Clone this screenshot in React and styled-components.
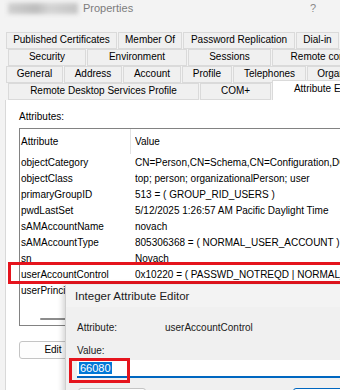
import styled, { createGlobalStyle } from "styled-components";

const GlobalStyle = createGlobalStyle`
  html, body { margin: 0; padding: 0; }
  body {
    width: 340px;
    height: 390px;
    overflow: hidden;
    background: #f3f3f3;
    font-family: "Liberation Sans", Arial, sans-serif;
    color: #000;
  }
  * { box-sizing: border-box; }
`;

const tabRows = [
    { left: 6, tabs: [["Published Certificates", 111], ["Member Of", 64], ["Password Replication", 112], ["Dial-in", 43], ["Object", 60]] },
    { left: 8, tabs: [["Security", 78], ["Environment", 100], ["Sessions", 83], ["Remote control", 105]] },
    { left: 6, tabs: [["General", 57], ["Address", 58], ["Account", 58], ["Profile", 50], ["Telephones", 73], ["Organization", 77]] },
    { left: 8, tabs: [["Remote Desktop Services Profile", 191], ["COM+", 71], ["Attribute Editor", 110, true]] },
];

const attributes = [
    ["objectCategory", "CN=Person,CN=Schema,CN=Configuration,DC=corp,DC=local"],
    ["objectClass", "top; person; organizationalPerson; user"],
    ["primaryGroupID", "513 = ( GROUP_RID_USERS )"],
    ["pwdLastSet", "5/12/2025 1:26:57 AM Pacific Daylight Time"],
    ["sAMAccountName", "novach"],
    ["sAMAccountType", "805306368 = ( NORMAL_USER_ACCOUNT )"],
    ["sn", "Novach"],
    ["userAccountControl", "0x10220 = ( PASSWD_NOTREQD | NORMAL_ACCOUNT | DONT_EXPIRE_PASSWD )"],
    ["userPrincipalName", "novach@corp.local"],
];

function App() {
    return (
        <Window>
            <GlobalStyle />
            <TitleBar>
                <BlurredName />
                <TitleText>Properties</TitleText>
                <Help>?</Help>
            </TitleBar>

            <Tabs>
                {tabRows.map((row, i) => (
                    <TabRow key={i} $left={row.left}>
                        {row.tabs.map(([label, width, active]) => (
                            <Tab key={label} $width={width} $active={active}>
                                {label}
                            </Tab>
                        ))}
                    </TabRow>
                ))}
            </Tabs>

            <Panel>
                <Label>Attributes:</Label>
                <ListBox>
                    <HeaderRow>
                        <NameHeader>Attribute</NameHeader>
                        <ValueCell>Value</ValueCell>
                    </HeaderRow>
                    {attributes.map(([name, value]) => (
                        <Row key={name}>
                            <NameCell>{name}</NameCell>
                            <ValueCell>{value}</ValueCell>
                        </Row>
                    ))}
                    <ScrollTrack>
                        <ScrollThumb />
                    </ScrollTrack>
                </ListBox>
                <EditButton>Edit</EditButton>
            </Panel>

            <RowHighlight />

            <Dialog>
                <DialogTitle>Integer Attribute Editor</DialogTitle>
                <DialogBody>
                    <FieldRow>
                        <span>Attribute:</span>
                        <span>userAccountControl</span>
                    </FieldRow>
                    <ValueLabel>Value:</ValueLabel>
                    <Input>
                        <Selected>66080</Selected>
                    </Input>
                    <ButtonRow>
                        <DialogButton />
                        <DialogButton $primary />
                    </ButtonRow>
                </DialogBody>
                <ValueHighlight />
            </Dialog>
        </Window>
    );
}

export default App;

const Window = styled.div`
    position: relative;
    width: 340px;
    height: 390px;
    overflow: hidden;
    display: flex;
    flex-flow: column nowrap;
`;

const TitleBar = styled.div`
    height: 32px;
    display: flex;
    align-items: flex-start;
    gap: 5px;
    padding: 1px 0 0 8px;
`;

const BlurredName = styled.div`
    width: 70px;
    height: 11px;
    margin-top: 2px;
    background: linear-gradient(90deg, #cfcfcf, #bdbdbd 40%, #d4d4d4 60%, #c4c4c4);
    filter: blur(2px);
`;

const TitleText = styled.div`
    font-size: 11px;
    line-height: 15px;
    color: #7c7c7c;
`;

const Help = styled.div`
    margin-left: auto;
    width: 30px;
    font-size: 11px;
    line-height: 15px;
    color: #8a8a8a;
`;

const Tabs = styled.div`
    display: flex;
    flex-flow: column nowrap;
`;

const TabRow = styled.div`
    display: flex;
    height: 17px;
    padding-left: ${(p) => p.$left}px;
    white-space: nowrap;
`;

const Tab = styled.div`
    flex: 0 0 ${(p) => p.$width}px;
    height: ${(p) => (p.$active ? 20 : 17)}px;
    margin-top: ${(p) => (p.$active ? -3 : 0)}px;
    margin-right: 1px;
    background: ${(p) => (p.$active ? "#ffffff" : "#f0f0f0")};
    border: 1px solid #dadada;
    border-bottom: ${(p) => (p.$active ? "none" : "1px solid #dadada")};
    font-size: 10px;
    line-height: ${(p) => (p.$active ? 15 : 14)}px;
    text-align: center;
    overflow: hidden;
    position: relative;
    z-index: ${(p) => (p.$active ? 1 : 0)};
`;

const Panel = styled.div`
    flex: 1;
    margin-left: 5px;
    background: #ffffff;
    border-left: 1px solid #d9d9d9;
    padding: 10px 0 0 13px;
    overflow: hidden;
`;

const Label = styled.div`
    font-size: 10px;
    line-height: 14px;
`;

const ListBox = styled.div`
    margin-top: 4px;
    width: 400px;
    height: 198px;
    border: 1px solid #828282;
    display: flex;
    flex-flow: column nowrap;
    overflow: hidden;
`;

const HeaderRow = styled.div`
    height: 25px;
    display: flex;
    align-items: center;
    font-size: 10px;
`;

const Row = styled.div`
    height: 16px;
    display: flex;
    align-items: center;
    font-size: 10px;
`;

const NameCell = styled.div`
    flex: 0 0 115px;
    padding-left: 1px;
    white-space: nowrap;
    overflow: hidden;
`;

const NameHeader = styled(NameCell)`
    flex-basis: 111px;
    align-self: stretch;
    display: flex;
    align-items: center;
    margin-right: 4px;
    border-right: 1px solid #e3e3e3;
`;

const ValueCell = styled.div`
    flex: 1;
    white-space: nowrap;
    overflow: hidden;
`;

const ScrollTrack = styled.div`
    margin-top: auto;
    height: 12px;
    display: flex;
    align-items: center;
    padding-left: 20px;
`;

const ScrollThumb = styled.div`
    width: 120px;
    height: 2px;
    background: #8c8c8c;
    border-radius: 1px;
`;

const EditButton = styled.div`
    margin-top: 15px;
    width: 68px;
    height: 18px;
    border: 1px solid #c4c4c4;
    border-radius: 3px;
    background: #fdfdfd;
    font-size: 10px;
    line-height: 16px;
    text-align: center;
`;

const RowHighlight = styled.div`
    position: absolute;
    left: 8px;
    top: 262px;
    width: 345px;
    height: 22px;
    border: 3px solid #e5141d;
    z-index: 2;
`;

const Dialog = styled.div`
    position: absolute;
    left: 65px;
    top: 285px;
    width: 300px;
    height: 130px;
    background: #f0f0f0;
    border-left: 1px solid #cfcfcf;
    box-shadow: -2px 0 6px rgba(0, 0, 0, 0.18);
    z-index: 3;
`;

const DialogTitle = styled.div`
    height: 22px;
    padding-left: 9px;
    font-size: 11.5px;
    line-height: 22px;
    color: #1b1b1b;
    background: #f3f3f3;
`;

const DialogBody = styled.div`
    padding: 14px 0 0 11px;
    display: flex;
    flex-flow: column nowrap;
    font-size: 10px;
`;

const FieldRow = styled.div`
    display: grid;
    grid-template-columns: 88px 1fr;
    line-height: 14px;
    color: #1b1b1b;
`;

const ValueLabel = styled.div`
    margin-top: 9px;
    line-height: 14px;
    color: #1b1b1b;
`;

const Input = styled.div`
    margin-top: 2px;
    height: 18px;
    background: #ffffff;
    border-bottom: 2px solid #0067c0;
    display: flex;
    align-items: center;
    padding-left: 2px;
`;

const Selected = styled.span`
    background: #0078d7;
    color: #ffffff;
    font-size: 11px;
    line-height: 12px;
    padding: 0 1px;
`;

const ButtonRow = styled.div`
    margin-top: 10px;
    display: flex;
    gap: 147px;
    padding-left: 1px;
`;

const DialogButton = styled.div`
    width: 68px;
    height: 20px;
    background: #fdfdfd;
    border: 1px solid ${(p) => (p.$primary ? "#0067c0" : "#c4c4c4")};
    border-radius: 3px;
`;

const ValueHighlight = styled.div`
    position: absolute;
    left: 3px;
    top: 73px;
    width: 61px;
    height: 25px;
    border: 3px solid #e5141d;
`;
